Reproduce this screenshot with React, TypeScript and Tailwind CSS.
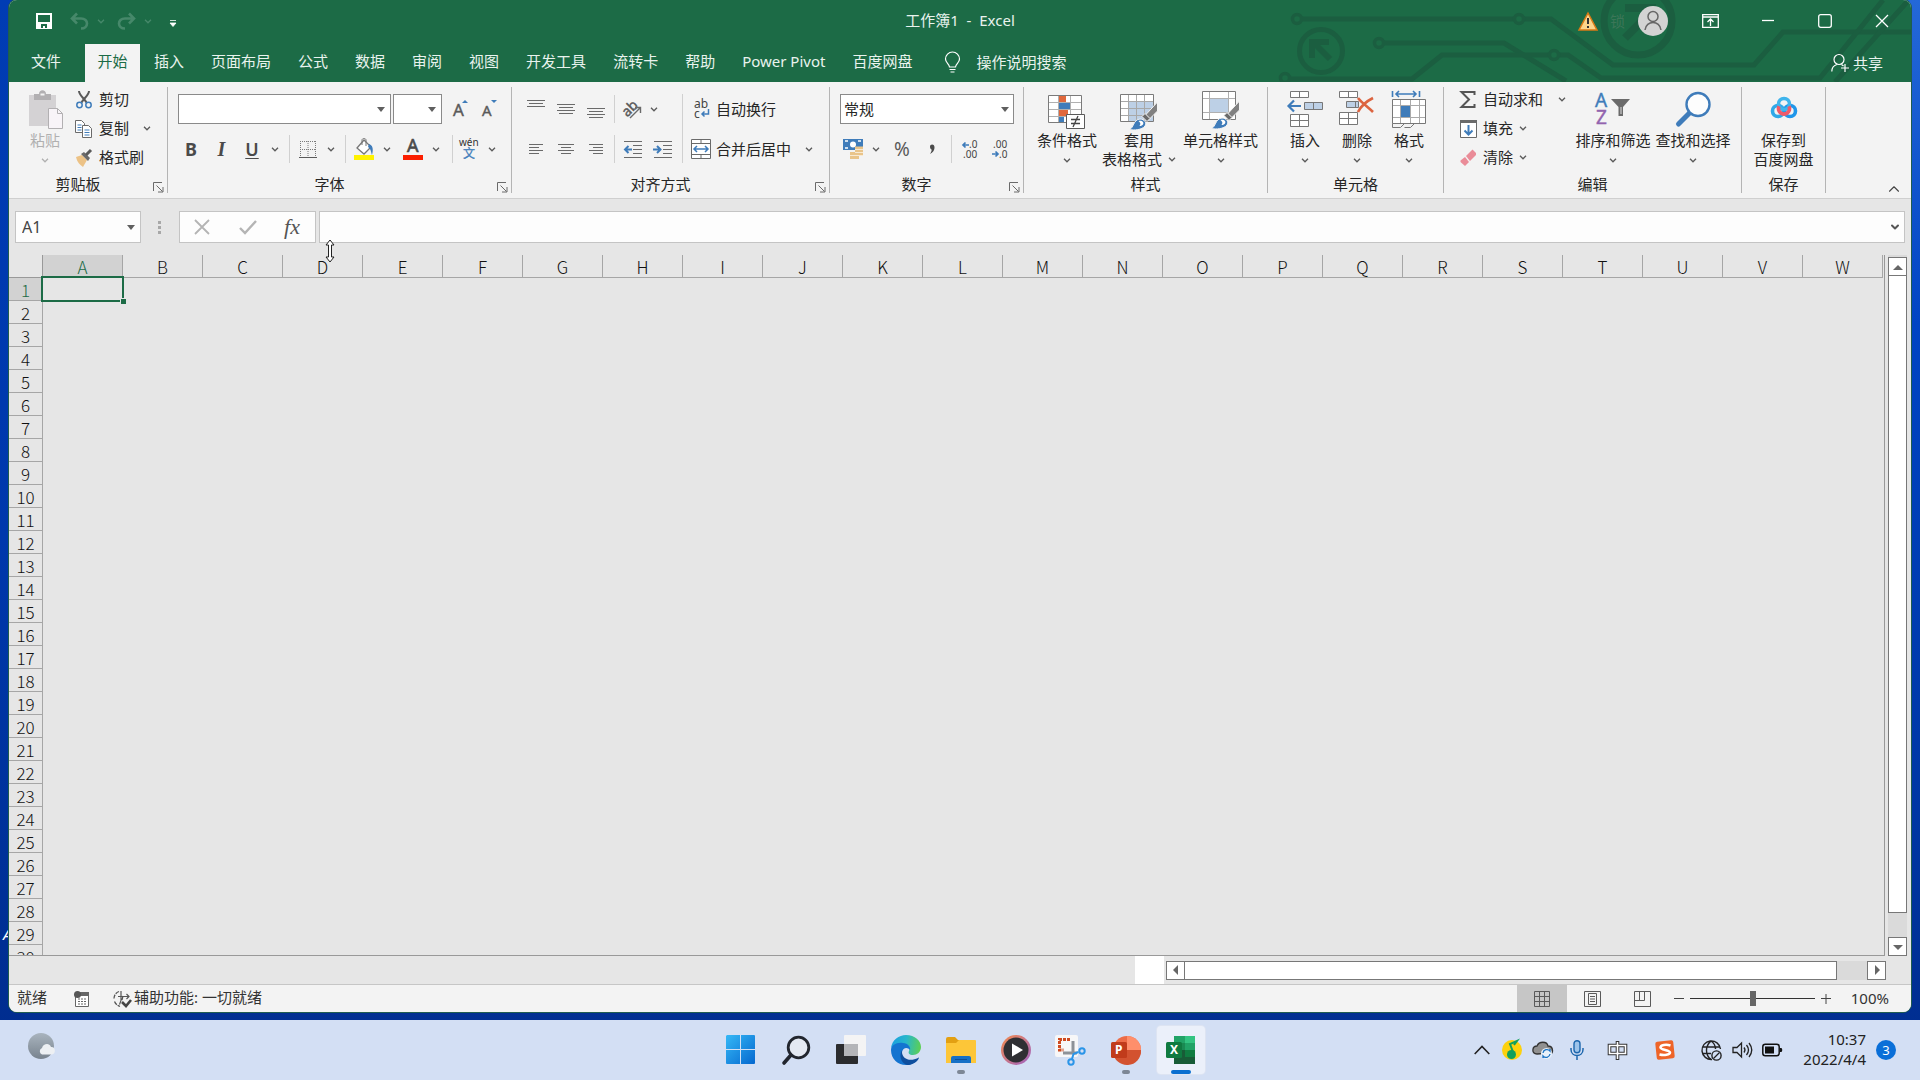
import type { ReactNode } from "react";
import { ChevronDown, ChevronUp } from "lucide-react";

const tabs = ["插入", "页面布局", "公式", "数据", "审阅", "视图", "开发工具", "流转卡", "帮助", "Power Pivot", "百度网盘"];
const columns = "ABCDEFGHIJKLMNOPQRSTUVW".split("");
const rows = Array.from({ length: 30 }, (_, i) => i + 1);

const GRAY = "#6a6a6a";
const BLUE = "#3f7cba";

type IconProps = { w: number; h: number; children: ReactNode; className?: string };

function Icon({ w, h, children, className = "" }: IconProps) {
  return (
    <svg width={w} height={h} viewBox={`0 0 ${w} ${h}`} fill="none" className={`shrink-0 overflow-visible ${className}`} aria-hidden="true">
      {children}
    </svg>
  );
}

function Slot({ label, className, children }: { label: string; className: string; children: ReactNode }) {
  return (
    <button type="button" aria-label={label} className={`flex h-7 shrink-0 items-center justify-center ${className}`}>
      {children}
    </button>
  );
}

function Caret({ className = "" }: { className?: string }) {
  return (
    <Icon w={8} h={5} className={className}>
      <path d="M1 .8 4 3.8 7 .8" stroke="currentColor" strokeWidth="1.3" />
    </Icon>
  );
}

function CaretSlot({ label, className }: { label: string; className: string }) {
  return (
    <Slot label={label} className={`text-[#5a5a5a] ${className}`}>
      <Caret />
    </Slot>
  );
}

function Triangle() {
  return (
    <Icon w={8} h={5} className="mr-[5px]">
      <path d="M0 0h8L4 5z" fill="#5f5f5f" />
    </Icon>
  );
}

function Rule({ className = "h-7" }: { className?: string }) {
  return <span className={`w-px shrink-0 bg-[#d0d0d0] ${className}`} />;
}

function Group({ title, width, launcher, children }: { title: string; width: string; launcher?: boolean; children: ReactNode }) {
  return (
    <section className={`flex shrink-0 flex-col border-r border-[#b4b4b4] ${width}`}>
      <div className="h-[89px]">{children}</div>
      <div className={`relative flex h-[17px] items-center justify-center text-[15px] leading-none ${launcher ? "pr-5" : ""}`}>
        {title}
        {launcher && (
          <button type="button" aria-label={`${title}设置`} className="absolute right-[3px] bottom-0">
            <Icon w={11} h={11}>
              <path d="M.5 9V.5H9M3.5 3.5l6 6M10 5v5H5" stroke="#6a6a6a" />
            </Icon>
          </button>
        )}
      </div>
    </section>
  );
}

type BigButtonProps = { icon: ReactNode; lines: string[]; className: string; inlineCaret?: boolean; noCaret?: boolean };

function BigButton({ icon, lines, className, inlineCaret, noCaret }: BigButtonProps) {
  return (
    <button type="button" className={`flex shrink-0 flex-col items-center ${className}`}>
      <span className="flex h-[44px] items-end justify-center pb-[2px]">{icon}</span>
      {lines.map((line, i) => (
        <span key={line} className="flex items-center gap-[6px] text-[15px] leading-[19px] whitespace-nowrap">
          {line}
          {inlineCaret && i === 1 && <Caret className="text-[#5a5a5a]" />}
        </span>
      ))}
      {!inlineCaret && !noCaret && <Caret className="mt-2 text-[#5a5a5a]" />}
    </button>
  );
}

function SmallButton({ icon, label, caret, wide }: { icon: ReactNode; label: string; caret?: boolean; wide?: boolean }) {
  return (
    <button type="button" className="flex h-[29px] items-center text-[15px] leading-none">
      <span className="mr-[6px] flex w-[18px] justify-center">{icon}</span>
      {label}
      {caret && <Caret className={`text-[#5a5a5a] ${wide ? "ml-[15px]" : "ml-[6px]"}`} />}
    </button>
  );
}

function HLines({ y, widths, align }: { y: number; widths: number[]; align: "left" | "center" | "right" }) {
  return (
    <Icon w={18} h={26}>
      {widths.map((w, i) => {
        const x = align === "left" ? 2 : align === "right" ? 16 - w : (18 - w) / 2;
        return <path key={i} d={`M${x} ${y + i * 3 + 0.5}h${w}`} stroke={GRAY} />;
      })}
    </Icon>
  );
}

function Indent({ dir }: { dir: "left" | "right" }) {
  return (
    <Icon w={20} h={18}>
      <path d="M1 1.5h18M10 5.5h9M10 9.5h9M10 13.5h9M1 17.5h18" stroke={GRAY} />
      {dir === "left" ? (
        <path d="M9 9.5H3M5.500 6 2 9.500l3.500 3.500" stroke={BLUE} strokeWidth="2" />
      ) : (
        <path d="M0 9.500h6M4 6l3.500 3.500L4 13" stroke={BLUE} strokeWidth="2" />
      )}
    </Icon>
  );
}

function Brush() {
  return (
    <>
      <path d="M37.500 10v9l-8 8-4-4z" fill="#808080" stroke="#f3f3f3" />
      <path d="m25 21.500 5 5-3 3-5-5z" fill="#6a6a6a" stroke="#f3f3f3" />
      <path d="M9 37.500c5-1 4-10 11-10.500 4.500 0 7 4 5 7-3 4-11 4.500-16 3.500z" fill={BLUE} stroke="#f3f3f3" />
      <path d="M18.500 29c3-1 6 1 4.500 3.500-1 1.500-2.500 1.500-3.500 1.500 1.500-2 1-3.500-1-5z" fill="#fff" />
    </>
  );
}

function ClipboardGroup() {
  return (
    <Group title="剪贴板" width="w-[159px]" launcher>
      <div className="flex pl-[14px]">
        <button type="button" className="flex w-11 shrink-0 flex-col items-center text-[#b0b0b0]">
          <span className="flex h-[44px] items-end pb-[2px] pl-[2px]">
            <Icon w={34} h={39}>
              <path d="M0 5h27v31H0z" fill="#d4d2d4" />
              <path d="M5 4h5c0-5 7-5 7 0h5v6H5z" fill="#b2b0b2" />
              <path d="M11.500 4.500h4" stroke="#f3f3f3" strokeWidth="2" />
              <path d="M19.500 18.500h9l5 5v15h-14z" fill="#f8f4f8" stroke="#b2b0b2" />
              <path d="M28.500 18.500v5h5" stroke="#b2b0b2" />
            </Icon>
          </span>
          <span className="text-[15px] leading-[19px]">粘贴</span>
          <Caret className="mt-2" />
        </button>
        <div className="-mt-[2px] flex flex-col pl-2">
          <SmallButton
            label="剪切"
            icon={
              <Icon w={16} h={18}>
                <path d="M3 0c0 4 5 7 7.500 11.500M13 0c0 4-5 7-7.500 11.500" stroke="#5a5a5a" strokeWidth="2" />
                <circle cx="3.500" cy="14" r="2.700" stroke={BLUE} strokeWidth="1.500" />
                <circle cx="12.500" cy="14" r="2.700" stroke={BLUE} strokeWidth="1.500" />
              </Icon>
            }
          />
          <div className="flex">
            <SmallButton
              label="复制"
              icon={
                <Icon w={18} h={18}>
                  <path d="M.5.500h6l3 3v9h-9z" fill="#fff" stroke={GRAY} />
                  <path d="M2.500 5h4M2.500 7.500h4M2.500 10h4" stroke={BLUE} />
                  <path d="M7.500 5.500h6l3 3v9h-9z" fill="#fff" stroke={GRAY} />
                  <path d="M9.500 10h5M9.500 12.500h5M9.500 15h5" stroke={BLUE} />
                </Icon>
              }
            />
            <CaretSlot label="复制选项" className="ml-2 w-5" />
          </div>
          <SmallButton
            label="格式刷"
            icon={
              <Icon w={18} h={18}>
                <path d="m1 8 6-2 5 5-4 7c-3-2-6-5-7-10z" fill="#ecc286" />
                <path d="m6 5 3-2 6 6-2 3z" fill="#6a6a6a" />
                <path d="m11 6 5-5" stroke="#5a5a5a" strokeWidth="3" />
              </Icon>
            }
          />
        </div>
      </div>
    </Group>
  );
}

function FontGroup() {
  return (
    <Group title="字体" width="w-[344px]" launcher>
      <div className="flex h-[44px] items-center pl-[10px]">
        <label className="flex h-[30px] w-[213px] items-center border border-[#8a8a8a] bg-white">
          <input aria-label="字体" className="h-full min-w-0 flex-1 bg-transparent px-1 outline-none" />
          <Triangle />
        </label>
        <label className="ml-[2px] flex h-[30px] w-[49px] items-center border border-[#8a8a8a] bg-white">
          <input aria-label="字号" className="h-full min-w-0 flex-1 bg-transparent px-1 outline-none" />
          <Triangle />
        </label>
        <Slot label="增大字号" className="ml-1 w-[29px]">
          <Icon w={15} h={18}>
            <text x="0" y="16" fontSize="17" fill="#5a5a5a" stroke="#5a5a5a" strokeWidth=".4">A</text>
            <path d="m9 3 3-3 3 3z" fill={BLUE} />
          </Icon>
        </Slot>
        <Slot label="减小字号" className="w-[29px]">
          <Icon w={15} h={18}>
            <text x="0" y="16" fontSize="15" fill="#5a5a5a" stroke="#5a5a5a" strokeWidth=".4">A</text>
            <path d="m9 0 3 3 3-3z" fill={BLUE} />
          </Icon>
        </Slot>
      </div>
      <div className="flex h-9 items-center pl-2 text-[18px] leading-none text-[#4a4a4a]">
        <Slot label="加粗" className="w-[30px] font-bold">B</Slot>
        <Slot label="倾斜" className="w-[31px] font-['Liberation_Serif'] text-[20px] font-bold italic">I</Slot>
        <Slot label="下划线" className="w-[30px] font-semibold underline underline-offset-2">U</Slot>
        <CaretSlot label="下划线样式" className="w-[16px]" />
        <Rule className="mx-[6px] h-7" />
        <Slot label="边框" className="w-[24px]">
          <Icon w={18} h={18}>
            <path d="M1 1.500h16M1 9.500h16M1.500 1v16M9 1v16M16.500 1v16" stroke="#7a7a7a" strokeDasharray="1 1" />
            <path d="M0 17.500h18" stroke="#5a5a5a" />
          </Icon>
        </Slot>
        <CaretSlot label="边框选项" className="ml-[3px] w-[16px]" />
        <Rule className="mx-[6px] h-7" />
        <Slot label="填充颜色" className="w-[24px]">
          <Icon w={20} h={22}>
            <path d="m10 2 7 7-7 7-7-6z" fill="#fff" stroke="#777" strokeWidth="1.300" />
            <path d="M8 7V2c0-2 4-2 4 0v6" stroke="#777" />
            <path d="M15 6c3 1 5 4 3 11-1-3-1-6-4-8z" fill={BLUE} />
            <path d="M0 17h20v5H0z" fill="#fff200" />
          </Icon>
        </Slot>
        <CaretSlot label="填充颜色选项" className="mx-[3px] w-[16px]" />
        <Slot label="字体颜色" className="ml-[3px] w-[24px]">
          <Icon w={20} h={22}>
            <text x="4" y="14" fontSize="18" fill="#4a4a4a" stroke="#4a4a4a" strokeWidth=".6">A</text>
            <path d="M0 17h20v5H0z" fill="#fb1e00" />
          </Icon>
        </Slot>
        <CaretSlot label="字体颜色选项" className="mx-[3px] w-[16px]" />
        <Rule className="ml-[5px] h-7" />
        <Slot label="拼音" className="ml-[4px] w-[24px]">
          <Icon w={18} h={22}>
            <text x="-1" y="8" fontSize="10" fill="#333">wén</text>
            <text x="3" y="20" fontSize="12" fill={BLUE} stroke={BLUE} strokeWidth=".3">文</text>
          </Icon>
        </Slot>
        <CaretSlot label="拼音选项" className="ml-[3px] w-[16px]" />
      </div>
    </Group>
  );
}

function AlignGroup() {
  return (
    <Group title="对齐方式" width="w-[318px]" launcher>
      <div className="flex">
        <div className="w-[170px]">
          <div className="flex h-[44px] items-center pl-[9px]">
            <Slot label="顶端对齐" className="w-[30px]"><HLines y={4} widths={[18, 14, 18]} align="center" /></Slot>
            <Slot label="垂直居中" className="w-[30px]"><HLines y={8} widths={[18, 14, 18, 14]} align="center" /></Slot>
            <Slot label="底端对齐" className="w-[30px]"><HLines y={12} widths={[18, 14, 18, 14]} align="center" /></Slot>
            <Rule className="ml-[3px] h-7" />
            <Slot label="方向" className="ml-[3px] w-7">
              <Icon w={20} h={20}>
                <text x="0" y="14" fontSize="14" fill="#5a5a5a" stroke="#5a5a5a" strokeWidth=".4" transform="rotate(-45 8 10)">ab</text>
                <path d="m8 19 10-10M13 8.500h5.500V14" stroke={GRAY} strokeWidth="1.400" />
              </Icon>
            </Slot>
            <CaretSlot label="方向选项" className="w-4" />
          </div>
          <div className="flex h-9 items-center pl-[9px]">
            <Slot label="左对齐" className="w-[30px]"><HLines y={8} widths={[14, 10, 14, 10]} align="left" /></Slot>
            <Slot label="居中" className="w-[30px]"><HLines y={8} widths={[16, 10, 16, 10]} align="center" /></Slot>
            <Slot label="右对齐" className="w-[30px]"><HLines y={8} widths={[14, 10, 14, 10]} align="right" /></Slot>
            <Rule className="ml-[3px] h-7" />
            <Slot label="减少缩进量" className="ml-[3px] w-[30px]"><Indent dir="left" /></Slot>
            <Slot label="增加缩进量" className="w-[30px]"><Indent dir="right" /></Slot>
          </div>
        </div>
        <Rule className="mt-[7px] h-[69px]" />
        <div className="pl-2">
          <button type="button" className="flex h-[44px] items-center text-[15px] leading-none">
            <Icon w={20} h={20} className="mr-[5px]">
              <text x="3" y="9" fontSize="12" fill="#444">ab</text>
              <text x="3" y="19" fontSize="12" fill="#444">c</text>
              <path d="M17.500 10v5H11M13.500 12.500 11 15l2.500 2.500" stroke={BLUE} strokeWidth="1.500" />
            </Icon>
            自动换行
          </button>
          <div className="flex h-9 items-center">
            <button type="button" className="flex items-center text-[15px] leading-none">
              <Icon w={20} h={20} className="mr-[5px]">
                <path d="M.5.500h19v19H.5zM.5 4.500h19M.5 15.500h19M10 .500v4M10 15.500v4" fill="#fff" stroke={GRAY} />
                <path d="M3 10h14M6 7l-3 3 3 3M14 7l3 3-3 3" stroke={BLUE} strokeWidth="1.500" />
              </Icon>
              合并后居中
            </button>
            <CaretSlot label="合并选项" className="ml-2 w-5" />
          </div>
        </div>
      </div>
    </Group>
  );
}

function NumberGroup() {
  return (
    <Group title="数字" width="w-[194px]" launcher>
      <div className="flex h-[44px] items-center pl-[10px]">
        <div className="relative h-[30px] w-[174px]">
          <select aria-label="数字格式" defaultValue="常规" className="size-full appearance-none border border-[#8a8a8a] bg-white pl-[3px] text-[15px] leading-none">
            <option>常规</option>
          </select>
          <span className="pointer-events-none absolute inset-y-0 right-0 flex items-center"><Triangle /></span>
        </div>
      </div>
      <div className="flex h-9 items-center pl-[10px]">
        <Slot label="会计数字格式" className="w-[26px]">
          <Icon w={20} h={20}>
            <path d="M0 0h20v11H0z" fill={BLUE} />
            <circle cx="10" cy="5.500" r="3" fill="#fff" />
            <path d="M2 2h3M15 2h3M2 9h3" stroke="#fff" strokeWidth="1.500" />
            <path d="M12 7.500h8v9h-4v3.500H7v-7h5z" fill="#e9c48a" />
            <path d="M12 10.500h8M12 13.500h8M7 16.500h13" stroke="#f8ead2" />
          </Icon>
        </Slot>
        <CaretSlot label="会计格式选项" className="ml-[2px] w-[16px]" />
        <Slot label="百分比样式" className="ml-[3px] w-[30px] text-[19px] leading-none text-[#5a5a5a]">%</Slot>
        <Slot label="千位分隔样式" className="w-[30px]">
          <Icon w={6} h={10}>
            <path d="M1 2.500C1-.5 6-.5 5.500 4 5 7 4 8.500 1 10c1-2 2-3 1.500-4.500C1.500 5 1 4 1 2.500z" fill="#4a4a4a" />
          </Icon>
        </Slot>
        <Rule className="ml-1 h-7" />
        <Slot label="增加小数位数" className="ml-[3px] w-[30px]">
          <Icon w={17} h={20}>
            <text x="7" y="9" fontSize="10" fill="#444">.0</text>
            <text x="1" y="19" fontSize="10" fill="#444">.00</text>
            <path d="M7 6H1M3.500 3.500 1 6l2.500 2.500" stroke={BLUE} strokeWidth="1.700" />
          </Icon>
        </Slot>
        <Slot label="减少小数位数" className="w-[30px]">
          <Icon w={17} h={20}>
            <text x="1" y="9" fontSize="10" fill="#444">.00</text>
            <text x="7" y="19" fontSize="10" fill="#444">.0</text>
            <path d="M0 15h6M3.500 12.500 6 15l-2.500 2.500" stroke={BLUE} strokeWidth="1.700" />
          </Icon>
        </Slot>
      </div>
    </Group>
  );
}

function StylesGroup() {
  return (
    <Group title="样式" width="w-[244px]">
      <div className="flex pl-[5px]">
        <BigButton
          className="w-[76px]"
          lines={["条件格式"]}
          icon={
            <Icon w={38} h={34}>
              <path d="M.5.500h33v27H.5z" fill="#fff" />
              <path d="M11 1h7v6h-7zM11 15h9v6h-9z" fill="#e0683c" />
              <path d="M11 8h11v6H11zM11 22h5v6h-5z" fill={BLUE} />
              <path d="M.5 7.500h33M.5 14.500h33M.5 21.500h33M10.500.500v27M22.500.500v27" stroke="#b0b0b0" />
              <path d="M.5.500h33v27H.5z" stroke="#7a7a7a" />
              <path d="M18.500 19.500h18v14h-18z" fill="#fff" stroke="#5a5a5a" />
              <path d="M23 24.500h9M23 28.500h9M30 21l-5 11" stroke="#444" strokeWidth="1.300" />
            </Icon>
          }
        />
        <BigButton
          className="w-[68px]"
          lines={["套用", "表格格式"]}
          inlineCaret
          icon={
            <Icon w={38} h={37}>
              <path d="M.5 2.500h33v27H.5z" fill="#fff" />
              <path d="M9 9h24v20H9z" fill="#bdd0e6" />
              <path d="M.5 9.500h33M.5 16.500h33M.5 23.500h33M8.500 2.500v27M16.500 2.500v27M24.500 2.500v27" stroke="#a8a8a8" />
              <path d="M.5 2.500h33v27H.5z" stroke="#7a7a7a" />
              <Brush />
            </Icon>
          }
        />
        <BigButton
          className="ml-[4px] w-[87px]"
          lines={["单元格样式"]}
          icon={
            <Icon w={38} h={38}>
              <path d="M.5.500h33v28H.5z" fill="#fff" />
              <path d="M8 7h18v14H8z" fill="#bdd0e6" />
              <path d="M.5 7.500h33M.5 21.500h33M7.500.500v28M26.500.500v28" stroke="#b0b0b0" />
              <path d="M.5.500h33v28H.5z" stroke="#7a7a7a" />
              <Brush />
            </Icon>
          }
        />
      </div>
    </Group>
  );
}

function CellsGroup() {
  return (
    <Group title="单元格" width="w-[176px]">
      <div className="flex pl-[11px]">
        <BigButton
          className="w-[52px]"
          lines={["插入"]}
          icon={
            <Icon w={36} h={38}>
              <path d="M3.500.500h18v6h-18zM12.500.500v6M3.500 23.500h18v12h-18zM12.500 23.500v12M3.500 29.500h18" fill="#fff" stroke="#777" />
              <path d="M17.500 11.500h18v7h-18zM26.500 11.500v7" fill="#bdd0e6" stroke="#777" />
              <path d="M14 15H2M7 9.500 1.500 15 7 20.500" stroke={BLUE} strokeWidth="2.200" />
            </Icon>
          }
        />
        <BigButton
          className="w-[52px]"
          lines={["删除"]}
          icon={
            <Icon w={36} h={38}>
              <path d="M.5.500h18v6H.5zM9.500.500v6M.5 21.500h18v12H.5zM9.500 21.500v12M.5 27.500h18" fill="#fff" stroke="#777" />
              <path d="M7.500 10.500h12v6h-12zM16.500 10.500v6" fill="#bdd0e6" stroke="#777" />
              <path d="M19 7c4 5 10 9 15 14M34 7c-6 3-12 8-15 14" stroke="#dc6440" strokeWidth="2.600" />
            </Icon>
          }
        />
        <BigButton
          className="w-[52px]"
          lines={["格式"]}
          icon={
            <Icon w={34} h={38}>
              <path d="M.5 0v6M27.500 0v6M4 3h20M7 0 4 3l3 3M21 0l3 3-3 3" stroke={BLUE} strokeWidth="1.600" />
              <path d="M.5 8.500h33v24H.5z" fill="#fff" />
              <path d="M.5 14.500h33M.5 26.500h33M8.500 8.500v24M18.500 8.500v24M27.500 8.500v24" stroke="#aaa" />
              <path d="M9 15h9v11H9z" fill={BLUE} />
              <path d="M.5 8.500h33v24H.5zM.5 32.500v4h8l4-4M12.500 36.500h6l4-4" stroke="#777" />
            </Icon>
          }
        />
      </div>
    </Group>
  );
}

function EditGroup() {
  return (
    <Group title="编辑" width="w-[298px]">
      <div className="flex pl-[15px]">
        <div className="-mt-[2px] flex w-[110px] flex-col items-start">
          <SmallButton
            label="自动求和"
            caret
            wide
            icon={
              <Icon w={16} h={17}>
                <path d="M14.500 4V1H1.500L9 8.500 1.500 16h13v-3" stroke="#555" strokeWidth="2" />
              </Icon>
            }
          />
          <SmallButton
            label="填充"
            caret
            icon={
              <Icon w={17} h={18}>
                <path d="M.5.500h16v17H.5z" fill="#fff" stroke={GRAY} />
                <path d="M0 0h17v3H0z" fill={GRAY} />
                <path d="M8.500 5v9M4.500 10.500l4 4 4-4" stroke={BLUE} strokeWidth="2" />
              </Icon>
            }
          />
          <SmallButton
            label="清除"
            caret
            icon={
              <Icon w={16} h={17}>
                <path d="m6 7 6.500-6.500L16 4v2l-6 6z" fill="#ea8c98" />
                <path d="m5 8 4 5-4 4-4.500-4v-1.500z" fill="#ea8c98" />
              </Icon>
            }
          />
        </div>
        <BigButton
          className="ml-[4px] w-[80px]"
          lines={["排序和筛选"]}
          icon={
            <Icon w={36} h={38}>
              <text x="0" y="16" fontSize="19" fill={BLUE} stroke={BLUE} strokeWidth=".4">A</text>
              <text x="1" y="33" fontSize="19" fill="#9264ae" stroke="#9264ae" strokeWidth=".4">Z</text>
              <path d="M16 8h19l-7 8v9h-4.500v-9z" fill={GRAY} />
              <path d="M26 16v7" stroke="#ddd" />
            </Icon>
          }
        />
        <BigButton
          className="w-[80px]"
          lines={["查找和选择"]}
          icon={
            <Icon w={35} h={38}>
              <path d="m2.500 33 12-12" stroke={BLUE} strokeWidth="5" strokeLinecap="round" />
              <circle cx="22" cy="13.500" r="11.500" fill="#fdfdfd" stroke={BLUE} strokeWidth="2.400" />
            </Icon>
          }
        />
      </div>
    </Group>
  );
}

function Ribbon() {
  return (
    <div className="flex h-[117px] border-b border-[#cfcfcf] bg-[#f3f3f3] pt-[5px] text-[#262626]">
      <div className="flex h-[106px] flex-1">
        <ClipboardGroup />
        <FontGroup />
        <AlignGroup />
        <NumberGroup />
        <StylesGroup />
        <CellsGroup />
        <EditGroup />
        <Group title="保存" width="w-[84px]">
          <BigButton
            className="w-full"
            lines={["保存到", "百度网盘"]}
            noCaret
            icon={
              <Icon w={28} h={34}>
                <circle cx="8" cy="16" r="5.500" stroke="#2fa8e8" strokeWidth="3.600" />
                <circle cx="20" cy="16" r="5.500" stroke="#1f96ea" strokeWidth="3.600" />
                <circle cx="14" cy="9" r="5.500" stroke="#3fb4ec" strokeWidth="3.600" />
                <path d="M9 11.300a5.500 5.500 0 1 0 10 0" stroke="#ee5a6a" strokeWidth="3.600" />
              </Icon>
            }
          />
        </Group>
      </div>
      <button type="button" aria-label="折叠功能区" className="mr-2 self-end text-[#444]">
        <ChevronUp size={18} strokeWidth={1.5} />
      </button>
    </div>
  );
}

function Circuit() {
  return (
    <svg width="641" height="82" viewBox="1270 0 641 82" fill="none" stroke="#1b5e40" strokeWidth="5" className="absolute top-0 right-0" aria-hidden="true">
      <circle cx="1297" cy="19" r="4.500" strokeWidth="3.500" />
      <path d="M1302 19h212M1523 19h28l62 46h141l29-33h128" />
      <circle cx="1519" cy="19" r="4.500" strokeWidth="3.500" />
      <circle cx="1321" cy="51" r="21.500" />
      <path d="m1330 59-15-15M1312 58V42h17" strokeWidth="6" />
      <circle cx="1379" cy="43" r="4.500" strokeWidth="3.500" />
      <path d="M1384 43h120l62 38" />
      <circle cx="1285" cy="78" r="4.500" strokeWidth="3.500" />
      <path d="M1290 79h122l30-24h108M1558 55h10l33 23h219l63-78M1835 82l72-80" />
      <circle cx="1554" cy="55" r="4.500" strokeWidth="3.500" />
      <circle cx="1638" cy="21" r="34" strokeWidth="7" />
      <path d="m1625 38 24-24M1625 8h27v26" strokeWidth="8" />
    </svg>
  );
}

function TitleBar() {
  return (
    <div className="relative grid h-11 grid-cols-[1fr_auto_1fr] items-start text-[#e9f3ee]">
      <div className="flex h-[42px] items-center pl-[27px]">
        <button type="button" aria-label="保存">
          <Icon w={16} h={16}>
            <path d="M1 1h14v14H1z" stroke="#fff" strokeWidth="2" />
            <path d="M2 9h12v6H2z" fill="#fff" />
            <path d="M5 11h6v4H9v-2H7v2H5z" fill="#1c6b46" />
          </Icon>
        </button>
        <button type="button" aria-label="撤消" className="ml-[18px] text-[#46886a]">
          <Icon w={19} h={18}>
            <path d="M2 6.500h9c8 0 8 10 0 10M7 1.500 2 6.500l5 5" stroke="currentColor" strokeWidth="2.600" />
          </Icon>
        </button>
        <Caret className="ml-2 text-[#46886a]" />
        <button type="button" aria-label="恢复" className="ml-[12px] text-[#46886a]">
          <Icon w={19} h={18}>
            <path d="M17 6.500H8c-8 0-8 10 0 10M12 1.500l5 5-5 5" stroke="currentColor" strokeWidth="2.600" />
          </Icon>
        </button>
        <Caret className="ml-2 text-[#46886a]" />
        <button type="button" aria-label="自定义快速访问工具栏" className="ml-[18px] pt-1">
          <Icon w={6} h={7}>
            <path d="M0 .500h6M0 3h6L3 6.500z" fill="#fff" stroke="#fff" strokeWidth=".8" />
          </Icon>
        </button>
      </div>
      <h1 className="flex h-10 items-center text-[15px] leading-none whitespace-pre">工作簿1  -  Excel</h1>
      <div className="flex h-[42px] items-center justify-end">
        <Icon w={20} h={19}>
          <path d="M10 1 19 18H1z" fill="#fbd58c" stroke="#d97a16" strokeWidth="1.500" />
          <path d="M10 6v6M10 14v2" stroke="#333" strokeWidth="2" />
        </Icon>
        <span className="ml-3 text-[15px] leading-none text-[#3b7658]">锁</span>
        <button type="button" aria-label="帐户" className="ml-[13px]">
          <Icon w={30} h={30}>
            <circle cx="15" cy="15" r="15" fill="#d3d3d3" />
            <circle cx="15" cy="10.500" r="5" stroke="#666" strokeWidth="1.500" />
            <path d="M7 24c1-10 15-10 16 0" stroke="#666" strokeWidth="1.500" />
          </Icon>
        </button>
        <button type="button" aria-label="功能区显示选项" className="ml-[34px]">
          <Icon w={17} h={14}>
            <path d="M.7.700h15.600v12.600H.7zM.7 3h15.600M8.500 12V5.500M5.500 8l3-3 3 3" stroke="#fff" strokeWidth="1.300" />
          </Icon>
        </button>
        <button type="button" aria-label="最小化" className="ml-[42px]">
          <Icon w={14} h={14}><path d="M1 6.500h12" stroke="#fff" strokeWidth="1.300" /></Icon>
        </button>
        <button type="button" aria-label="最大化" className="ml-[43px]">
          <Icon w={14} h={14}><rect x=".7" y=".7" width="12.600" height="12.600" rx="2" stroke="#fff" strokeWidth="1.300" /></Icon>
        </button>
        <button type="button" aria-label="关闭" className="mr-[22px] ml-[43px]">
          <Icon w={14} h={14}><path d="m1 1 12 12M13 1 1 13" stroke="#fff" strokeWidth="1.300" /></Icon>
        </button>
      </div>
    </div>
  );
}

function TabBar() {
  return (
    <nav className="relative flex h-[38px] items-center text-[15px] leading-none text-[#e9f3ee]">
      <button type="button" className="ml-[22px] h-full pb-[3px]">文件</button>
      <button type="button" className="ml-6 h-full w-[55px] bg-[#f3f3f3] pb-[3px] text-[#1c6b46]">开始</button>
      <div className="ml-[14px] flex h-full gap-[27px]">
        {tabs.map((t) => (
          <button type="button" key={t} className="pb-[3px] whitespace-nowrap">{t}</button>
        ))}
      </div>
      <button type="button" className="ml-[33px] flex items-center gap-4 pb-px">
        <Icon w={15} h={21}>
          <path d="M4.500 15c0-3-4-4-4-8a7 7 0 0 1 14 0c0 4-4 5-4 8zM4.500 17.500h6M5.500 20h4" stroke="#fff" strokeWidth="1.200" />
        </Icon>
        操作说明搜索
      </button>
      <button type="button" className="mr-[28px] ml-auto flex items-center gap-1">
        <Icon w={18} h={18}>
          <circle cx="8" cy="5.500" r="5" stroke="#fff" strokeWidth="1.200" />
          <path d="M.8 17.500c0-4 2-6 5-7M10.500 10.500l2 1.500M14 10v8M10 14h8" stroke="#fff" strokeWidth="1.200" />
        </Icon>
        共享
      </button>
    </nav>
  );
}

function FormulaBar() {
  return (
    <div className="flex h-14 items-start pt-3 pr-[6px] pl-[6px]">
      <label className="flex h-8 w-[126px] items-center border border-[#c4c4c4] bg-[#fdfdfd]">
        <input aria-label="名称框" defaultValue="A1" className="h-full min-w-0 flex-1 bg-transparent pl-[6px] text-[16px] text-[#444] outline-none" />
        <Triangle />
      </label>
      <Icon w={38} h={32}>
        <path d="M17 10h3v3h-3zM17 15h3v3h-3zM17 20h3v3h-3z" fill="#a8a8a8" />
      </Icon>
      <div className="flex h-8 w-[137px] items-center border border-[#c4c4c4] bg-[#fdfdfd]">
        <Slot label="取消" className="w-11">
          <Icon w={16} h={16}><path d="m1 1 14 14M15 1 1 15" stroke="#b4b4b4" strokeWidth="1.800" /></Icon>
        </Slot>
        <Slot label="输入" className="w-12">
          <Icon w={18} h={16}><path d="m1 9 5 5L17 2" stroke="#b4b4b4" strokeWidth="2.400" /></Icon>
        </Slot>
        <Slot label="插入函数" className="w-10 font-['Liberation_Serif'] text-[22px] leading-none text-[#555] italic">fx</Slot>
      </div>
      <div className="ml-[3px] flex h-8 flex-1 items-center border border-[#c4c4c4] bg-[#fdfdfd]">
        <input aria-label="编辑栏" className="h-full min-w-0 flex-1 bg-transparent px-2 outline-none" />
        <button type="button" aria-label="展开编辑栏" className="mr-[3px] text-[#555]">
          <ChevronDown size={12} strokeWidth={4} />
        </button>
      </div>
    </div>
  );
}

function Sheet() {
  return (
    <div className="min-h-0 flex-1 overflow-hidden border-r border-b border-[#999]">
      <table className="w-[1874px] table-fixed border-separate border-spacing-0 text-[17px] leading-none text-[#111]">
        <thead>
          <tr className="h-[23px]">
            <td className="w-[34px] border-r border-b border-[#999]" />
            {columns.map((c, i) => (
              <th
                key={c}
                scope="col"
                className={`w-20 border-r border-b border-[#a6a6a6] p-0 font-['Noto_Sans_CJK_SC'] font-light ${i === 0 ? "bg-[#d2d2d2] text-[#1c6b46]" : ""}`}
              >
                {c}
              </th>
            ))}
          </tr>
        </thead>
        <tbody>
          {rows.map((r) => (
            <tr key={r} className="h-[23px]">
              <th
                scope="row"
                className={`border-r border-b border-[#a6a6a6] p-0 font-['Noto_Sans_CJK_SC'] font-light ${r === 1 ? "bg-[#d2d2d2] text-[#1c6b46]" : ""}`}
              >
                {r}
              </th>
              {r === 1 ? (
                <td className="relative p-0">
                  <span className="absolute -top-[2px] -right-px -bottom-px -left-[2px] border-2 border-[#1c6b46]" />
                  <span className="absolute -right-[3px] -bottom-[3px] size-[5px] bg-[#1c6b46] outline outline-[#e6e6e6]" />
                </td>
              ) : (
                <td />
              )}
              <td colSpan={22} />
            </tr>
          ))}
        </tbody>
      </table>
    </div>
  );
}

function ScrollButton({ label, d }: { label: string; d: string }) {
  return (
    <button type="button" aria-label={label} className="flex size-[19px] shrink-0 items-center justify-center border border-[#777] bg-white">
      <Icon w={10} h={10}><path d={d} fill="#666" /></Icon>
    </button>
  );
}

function StatusBar() {
  return (
    <footer className="flex h-7 items-center border-t border-[#c6c6c6] bg-[#f3f3f3] text-[15px] leading-none text-[#333]">
      <span className="pb-[2px] pl-2">就绪</span>
      <button type="button" aria-label="录制宏" className="ml-[27px]">
        <Icon w={15} h={16}>
          <path d="M1.500 3.500h13v12h-13z" fill="#fff" stroke="#666" />
          <path d="M4 1h11v4H4z" fill="#666" />
          <circle cx="3.500" cy="3.500" r="3.500" fill="#555" />
          <path d="M4 8h9M4 10.500h9M4 13h9" stroke="#666" strokeDasharray="2 1" />
        </Icon>
      </button>
      <button type="button" className="ml-6 flex items-center gap-[3px]">
        <Icon w={18} h={18}>
          <path d="M6 1.500A7.500 7.500 0 0 0 1 9M1.500 11.500Q3 15 7 16.500" stroke="#555" strokeWidth="1.300" strokeDasharray="4 1" />
          <path d="M8 1v5M5 6.500h3v4l-1.500 4M8 6.500h8M13.500 4 16 6.500 13.500 9M10 6l-1 4" stroke="#555" strokeWidth="1.200" />
          <path d="m9 12 4 4 5-6" stroke="#444" strokeWidth="2.600" />
        </Icon>
        <span className="pb-[2px]">辅助功能: 一切就绪</span>
      </button>
      <div className="ml-auto flex h-full items-center">
        <button type="button" aria-label="普通" className="flex h-full w-[50px] items-center justify-center bg-[#c6c6c6]">
          <Icon w={16} h={16}><path d="M.5.500h15v15H.5zM.5 5.500h15M.5 10.500h15M5.500.500v15M10.500.500v15" stroke="#5a5a5a" /></Icon>
        </button>
        <button type="button" aria-label="页面布局" className="flex h-full w-[50px] items-center justify-center">
          <Icon w={17} h={16}><path d="M.5.500h16v15H.5zM4.500 2.500h8v11h-8zM6 5.500h5M6 8h5M6 10.500h5" stroke="#5a5a5a" /></Icon>
        </button>
        <button type="button" aria-label="分页预览" className="flex h-full w-[50px] items-center justify-center">
          <Icon w={17} h={16}><path d="M.5.500h16v15H.5zM.5 9.500h10v-9M5.500.500v9" stroke="#5a5a5a" /></Icon>
        </button>
        <button type="button" aria-label="缩小" className="ml-[7px]">
          <Icon w={10} h={10}><path d="M0 4.500h10" stroke="#444" /></Icon>
        </button>
        <input
          type="range"
          aria-label="缩放"
          defaultValue={50}
          className="mx-[6px] h-[15px] w-[125px] appearance-none bg-[linear-gradient(#333,#333)] bg-[length:100%_1px] bg-center bg-no-repeat [&::-webkit-slider-thumb]:h-[15px] [&::-webkit-slider-thumb]:w-[6px] [&::-webkit-slider-thumb]:appearance-none [&::-webkit-slider-thumb]:bg-[#666]"
        />
        <button type="button" aria-label="放大">
          <Icon w={10} h={10}><path d="M0 4.500h10M5 0v10" stroke="#444" /></Icon>
        </button>
        <button type="button" className="mr-[22px] ml-[18px] w-10 text-right">100%</button>
      </div>
    </footer>
  );
}

function TaskButton({ label, children, state }: { label: string; children: ReactNode; state?: "open" | "active" }) {
  return (
    <button
      type="button"
      aria-label={label}
      className={`relative flex size-12 items-center justify-center rounded-[4px] ${state === "active" ? "bg-[#ebf0fa] ring-1 ring-[#dde4f2]" : ""}`}
    >
      {children}
      {state === "open" && <span className="absolute bottom-0 h-1 w-2 rounded-full bg-[#7d8795]" />}
      {state === "active" && <span className="absolute bottom-0 h-1 w-5 rounded-full bg-[#0a6fd0]" />}
    </button>
  );
}

function Taskbar() {
  return (
    <div className="relative grid h-[60px] shrink-0 grid-cols-[1fr_auto_1fr] items-center bg-[#d3dff4] text-[#222]">
      <button type="button" aria-label="天气" className="mb-[9px] ml-7 justify-self-start">
        <Icon w={28} h={28}>
          <defs>
            <linearGradient id="moon" x1="0" y1="0" x2="0" y2="1">
              <stop stopColor="#a9b4be" />
              <stop offset="1" stopColor="#78838e" />
            </linearGradient>
          </defs>
          <circle cx="13" cy="14" r="13" fill="url(#moon)" />
          <path d="M14 22.500a3.500 3.500 0 0 1 0-6.500c1-4 7-6 9-1 5-.5 5 7 1 7.500z" fill="#edf0f3" />
        </Icon>
      </button>
      <div className="ml-px flex gap-[7px]">
        <TaskButton label="开始">
          <Icon w={30} h={30}>
            <defs>
              <linearGradient id="win" x1="0" y1="0" x2="1" y2="1">
                <stop stopColor="#35b8f6" />
                <stop offset="1" stopColor="#0568cf" />
              </linearGradient>
            </defs>
            <path d="M1 0h13v14H0V1zM15 0h13q1 0 1 1v13H15zM0 15h14v14H1q-1 0-1-1zM15 15h14v13q0 1-1 1H15z" fill="url(#win)" />
          </Icon>
        </TaskButton>
        <TaskButton label="搜索">
          <Icon w={28} h={30}>
            <circle cx="16.500" cy="12.500" r="10.300" fill="#e4e9f2" stroke="#22262e" strokeWidth="2.800" />
            <path d="m9 20-7 8" stroke="#22262e" strokeWidth="3.600" strokeLinecap="round" />
          </Icon>
        </TaskButton>
        <TaskButton label="任务视图">
          <Icon w={30} h={30}>
            <rect y="9" width="22" height="20" rx="1" fill="#2b2c2e" />
            <rect x="8" y="0" width="22" height="21" rx="1" fill="#f4f4f4" />
            <path d="M8 9h14v12H8z" fill="#b4b5b8" />
          </Icon>
        </TaskButton>
        <TaskButton label="Edge">
          <Icon w={30} h={30}>
            <defs>
              <linearGradient id="edge" x1="0" y1=".3" x2="1" y2=".4">
                <stop stopColor="#1a9fe0" />
                <stop offset=".5" stopColor="#28b7cb" />
                <stop offset="1" stopColor="#5ccf55" />
              </linearGradient>
            </defs>
            <path d="M0 13C1 5 8 0 15 0c9 0 15 6 15 12 0 5-4 8-8 8-4 0-5-2-4-4 2-4-1-7-5-7C7 9 2 11 0 13z" fill="url(#edge)" />
            <path d="M0 15c0-5 6-8 12-7 5 0 8 4 7 7-2-3-7-3-8 2-1 8 8 12 16 7-3 4-7 6-12 6C7 30 0 24 0 15z" fill="#1474d0" />
            <path d="M11 17c0 7 8 10 16 6 1-1 1 0 .5 1C25 28 20 30 16 30 10 28 7 20 12 14c-1 1-1 2-1 3z" fill="#0f4f9e" />
          </Icon>
        </TaskButton>
        <TaskButton label="文件资源管理器" state="open">
          <Icon w={30} h={28}>
            <path d="M0 3q0-2 2-2h7l3 3h17v8H0z" fill="#e3a012" />
            <path d="M0 7h10l3-3h16q1 0 1 1v22H0z" fill="#fdc638" />
            <path d="M5 27v-5q0-2 2-2h16q2 0 2 2v5z" fill="#1670c6" />
            <path d="M9 23.500h12" stroke="#0d4f98" />
          </Icon>
        </TaskButton>
        <TaskButton label="媒体播放器">
          <Icon w={30} h={30}>
            <defs>
              <linearGradient id="media" x1="0" y1="0" x2="1" y2="1">
                <stop stopColor="#f58b4c" />
                <stop offset="1" stopColor="#9d62c4" />
              </linearGradient>
            </defs>
            <circle cx="15" cy="15" r="15" fill="url(#media)" />
            <circle cx="15" cy="15" r="12.500" fill="#2f2f33" />
            <path d="M11 8.500v13L22 15z" fill="#fff" />
          </Icon>
        </TaskButton>
        <TaskButton label="截图工具">
          <Icon w={31} h={30}>
            <rect width="23" height="22" rx="2" fill="#f7f7f8" />
            <path d="M15 4.500H4.500V15h4" stroke="#cf4a1f" strokeWidth="3" strokeDasharray="3 1" />
            <path d="M18 6v13M8 18h14" stroke="#8d9298" strokeWidth="3" />
            <circle cx="27" cy="16" r="2.700" stroke="#2b95e8" strokeWidth="2" />
            <circle cx="16" cy="27" r="2.700" stroke="#2b95e8" strokeWidth="2" />
            <path d="m17 24 1.500-5 5-2" stroke="#2b95e8" strokeWidth="2" />
          </Icon>
        </TaskButton>
        <TaskButton label="PowerPoint" state="open">
          <Icon w={30} h={28}>
            <circle cx="16" cy="14" r="14" fill="#ed6c47" />
            <path d="M16 0a14 14 0 0 1 14 14H16z" fill="#ff8f6b" />
            <path d="M16 14h14a14 14 0 0 1-28 2z" fill="#d35230" />
            <rect y="6" width="16" height="16" rx="1.500" fill="#c13b1b" />
            <text x="4" y="18" fontSize="12" fontWeight="700" fill="#fff">P</text>
          </Icon>
        </TaskButton>
        <TaskButton label="Excel" state="active">
          <Icon w={30} h={28}>
            <path d="M8 0h11v28H8z" fill="#1a8a52" />
            <path d="M19 0h10v7H19z" fill="#33c481" />
            <path d="M8 0h11v7H8z" fill="#21a366" />
            <path d="M19 7h10v7H19z" fill="#21a366" />
            <path d="M8 14h11v7H8z" fill="#185c37" />
            <path d="M19 14h10v7H19z" fill="#107c41" />
            <path d="M8 21h21v7H8z" fill="#185c37" />
            <rect y="6" width="16" height="16" rx="1.500" fill="#0f7a40" />
            <text x="4" y="18" fontSize="12" fontWeight="700" fill="#fff">X</text>
          </Icon>
        </TaskButton>
      </div>
      <div className="flex items-center justify-end pr-6">
        <button type="button" aria-label="显示隐藏的图标">
          <Icon w={16} h={10}><path d="m.7 9 7.300-7.500L15.300 9" stroke="#222" strokeWidth="1.600" /></Icon>
        </button>
        <Icon w={20} h={20} className="ml-3">
          <circle cx="10" cy="10" r="10" fill="#fdd10c" />
          <circle cx="9.500" cy="14.500" r="4.500" fill="#12a05c" />
          <path d="M12 14.500 8 4l7-3-3 4" stroke="#12a05c" strokeWidth="2" />
        </Icon>
        <Icon w={21} h={18} className="ml-[10px]">
          <path d="M5 13c-6 0-5-8 0-8 2-5 10-5 11 0 5 0 5 5 4 7z" fill="#909090" stroke="#333" strokeWidth="1.300" />
          <circle cx="14.500" cy="12.500" r="5.500" fill="#e8f1fa" />
          <path d="M11 12a4 4 0 0 1 7-2V8M18 13a4 4 0 0 1-7 2v2" stroke="#1b73c4" strokeWidth="1.300" />
        </Icon>
        <Icon w={14} h={20} className="ml-[17px]">
          <rect x="4" y=".7" width="6" height="12" rx="3" stroke="#1d67ad" strokeWidth="1.400" fill="#9dc4ea" />
          <path d="M1 8v1.500c0 8 12 8 12 0V8M7 15.500V20" stroke="#1d67ad" strokeWidth="1.500" />
        </Icon>
        <button type="button" aria-label="输入法" className="ml-6">
          <Icon w={19} h={19}>
            <path d="M1.500 4.500h16v8h-16zM9.500 0v19" stroke="#333" strokeWidth="3.600" />
            <path d="M1.500 4.500h16v8h-16zM9.500 1v17" stroke="#fff" strokeWidth="1.600" />
          </Icon>
        </button>
        <Icon w={20} h={20} className="ml-7">
          <rect x="1" y="1" width="18" height="18" rx="2" fill="#ee6428" transform="rotate(-6 10 10)" />
          <path d="M15.500 5.500C11 4 5.500 5 5.500 7.500S15 10 15 12.500 9 15.500 4.500 14.500" stroke="#fff" strokeWidth="2.600" />
        </Icon>
        <Icon w={21} h={21} className="ml-[26px]">
          <path d="M11 19.500A9.300 9.300 0 1 1 19.500 9M10 1c-6 5-6 14 0 18.500M10 1c3 2 4.500 5 4.500 8M1.500 7h17M1.500 13.500H10" stroke="#222" strokeWidth="1.400" />
          <circle cx="15.500" cy="15.500" r="4.600" stroke="#222" strokeWidth="1.400" />
          <path d="m12.500 18.500 6-6" stroke="#222" strokeWidth="1.300" />
        </Icon>
        <Icon w={21} h={18} className="ml-[10px]">
          <path d="M1 6.500h4L9.500 2v14L5 11.500H1z" stroke="#222" strokeWidth="1.300" />
          <path d="M12 6.500q2 2.500 0 5M14.500 4q4 5 0 10M17 2q5.500 7 0 14" stroke="#222" strokeWidth="1.300" />
        </Icon>
        <Icon w={21} h={14} className="ml-[9px]">
          <rect x=".8" y="1.200" width="16.400" height="11.600" rx="2.500" stroke="#111" strokeWidth="1.500" />
          <path d="M3 3.500h9v7H3zM18 5h1.500q1.500 2 0 4H18z" fill="#111" />
        </Icon>
        <time className="ml-[20px] pb-[2px] text-right text-[15px] leading-5">
          10:37
          <br />
          2022/4/4
        </time>
        <span className="ml-[10px] flex size-5 items-center justify-center rounded-full bg-[#0a6fd8] text-[13px] leading-none text-white">3</span>
      </div>
    </div>
  );
}

export default function App() {
  return (
    <div className="relative flex h-screen flex-col overflow-hidden bg-[linear-gradient(to_bottom,#2468d8,#0044c4_30%,#0036a4_75%,#002c8c)] font-['Noto_Sans','Noto_Sans_CJK_SC',sans-serif]">
      <div className="absolute inset-y-0 left-0 w-6 bg-[linear-gradient(to_bottom,#003cb4,#0038ac_50%,#002c8c)]" />
      <span className="absolute top-[926px] left-[3px] text-[15px] leading-4 text-white italic">A</span>
      <main className="relative mx-[9px] mb-2 flex min-h-0 flex-1 flex-col overflow-hidden rounded-lg bg-[#e6e6e6] ring-1 ring-[#1f5c50]">
        <header className="relative shrink-0 bg-[#1c6b46]">
          <Circuit />
          <TitleBar />
          <TabBar />
        </header>
        <Ribbon />
        <FormulaBar />
        <div className="flex min-h-0 flex-1">
          <Sheet />
          <div className="mr-1 ml-[3px] flex w-[19px] flex-col bg-[#dadada] pt-[2px]">
            <ScrollButton label="向上滚动" d="M0 8h10L5 3z" />
            <div className="-mt-px flex-1 border border-[#777] bg-white" />
            <div className="h-6" />
            <ScrollButton label="向下滚动" d="M0 3h10L5 8z" />
          </div>
        </div>
        <div className="flex h-7 items-center pr-[25px]">
          <div className="ml-auto h-full w-[29px] bg-white" />
          <div className="ml-[2px] flex w-[720px] bg-[#dadada]">
            <ScrollButton label="向左滚动" d="M7 0v10L2 5z" />
            <div className="-ml-px flex-1 border border-[#777] bg-white" />
            <div className="w-[30px]" />
            <ScrollButton label="向右滚动" d="M3 0v10l5-5z" />
          </div>
        </div>
        <StatusBar />
        <svg width="12" height="24" viewBox="0 0 12 24" className="absolute top-[239px] left-[315px]" aria-hidden="true">
          <path d="m6 1 4 5H7.500v12H10l-4 5-4-5h2.500V6H2z" fill="#fff" stroke="#222" strokeWidth="1" />
        </svg>
      </main>
      <Taskbar />
    </div>
  );
}
